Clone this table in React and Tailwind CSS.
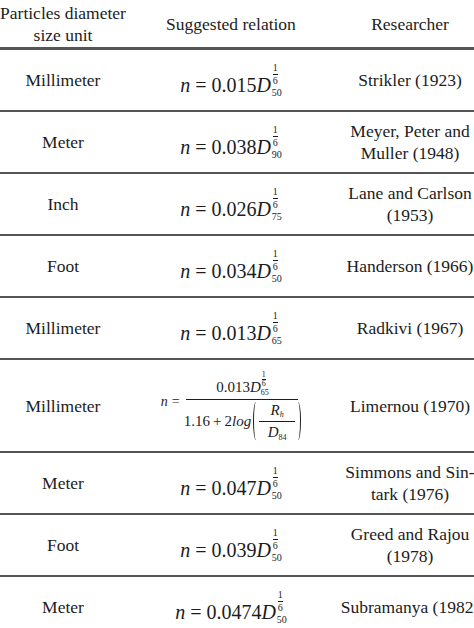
import React from 'react';

const ink = 'text-[#1c1c1c]';

const Power = ({ coef, sub }) => (
  <div className="flex items-end text-[20px] leading-none whitespace-nowrap">
    <span className="mb-[3px]">
      <i>n</i>
      <span className="mx-[5px]">=</span>
      {coef}
      <i>D</i>
    </span>
    <span className="flex flex-col items-start text-[10px] leading-none ml-[1px]">
      <span className="flex flex-col items-center w-[7px]">
        <span>1</span>
        <span className="h-px w-[5px] bg-[#1c1c1c] mt-[1px] mb-[1px]" />
        <span>6</span>
      </span>
      <span className="mt-[2px]">{sub}</span>
    </span>
  </div>
);

const Limernou = () => (
  <div className="flex items-center leading-none whitespace-nowrap">
    <span className="text-[14px] mr-[4px] mt-[-8px]">
      <i>n</i>
      <span className="ml-[4px]">=</span>
    </span>
    <div className="flex flex-col items-center">
      <div className="flex items-end text-[15px]">
        <span className="mb-[2px]">
          0.013<i>D</i>
        </span>
        <span className="flex flex-col items-start text-[8px] leading-none">
          <span className="flex flex-col items-center w-[6px]">
            <span>1</span>
            <span className="h-px w-[4px] bg-[#1c1c1c]" />
            <span>6</span>
          </span>
          <span className="mt-[1px]">65</span>
        </span>
      </div>
      <div className="h-px w-[112px] bg-[#1c1c1c] mt-[2px]" />
      <div className="flex items-center text-[15px] mt-[2px]">
        <span>
          1.16<span className="mx-[3px]">+</span>2<i>log</i>
        </span>
        <span className="w-[6px] h-[38px] border-l border-[#1c1c1c] rounded-l-[50%] ml-[2px]" />
        <span className="flex flex-col items-center">
          <span className="flex items-end px-[3px]">
            <i>R</i>
            <i className="text-[8px] mb-[-1px]">h</i>
          </span>
          <span className="h-px w-[36px] bg-[#1c1c1c] my-[3px]" />
          <span className="flex items-end px-[3px]">
            <i>D</i>
            <span className="text-[8px] mb-[-2px]">84</span>
          </span>
        </span>
        <span className="w-[6px] h-[38px] border-r border-[#1c1c1c] rounded-r-[50%]" />
      </div>
    </div>
  </div>
);

const rows = [
  { unit: 'Millimeter', f: <Power coef="0.015" sub="50" />, who: ['Strikler (1923)'] },
  { unit: 'Meter', f: <Power coef="0.038" sub="90" />, who: ['Meyer, Peter and', 'Muller (1948)'] },
  { unit: 'Inch', f: <Power coef="0.026" sub="75" />, who: ['Lane and Carlson', '(1953)'] },
  { unit: 'Foot', f: <Power coef="0.034" sub="50" />, who: ['Handerson (1966)'] },
  { unit: 'Millimeter', f: <Power coef="0.013" sub="65" />, who: ['Radkivi (1967)'] },
  { unit: 'Millimeter', f: <Limernou />, who: ['Limernou (1970)'], tall: true },
  { unit: 'Meter', f: <Power coef="0.047" sub="50" />, who: ['Simmons and Sin-', 'tark (1976)'] },
  { unit: 'Foot', f: <Power coef="0.039" sub="50" />, who: ['Greed and Rajou', '(1978)'] },
  { unit: 'Meter', f: <Power coef="0.0474" sub="50" />, who: ['Subramanya (1982)'] },
];

const cols = 'grid grid-cols-[134px_202px_156px]';

export default function App() {
  return (
    <div
      className={`w-[474px] h-[628px] overflow-hidden bg-white ${ink}`}
      style={{ fontFamily: '"Liberation Serif", "Times New Roman", serif' }}
    >
      <div className="w-[492px] ml-[-4px] text-[17.5px] leading-[22px]">
        <div className={`${cols} h-[50px] border-b-[3px] border-[#555] items-center text-center`}>
          <div className="whitespace-nowrap">
            Particles diameter
            <br />
            size unit
          </div>
          <div className="whitespace-nowrap">Suggested relation</div>
          <div className="whitespace-nowrap">Researcher</div>
        </div>
        {rows.map((r, i) => (
          <div
            key={i}
            className={`${cols} ${r.tall ? 'h-[93px]' : 'h-[62px]'} border-b-2 border-[#555] items-center text-center`}
          >
            <div className="whitespace-nowrap">{r.unit}</div>
            <div className="flex justify-center">{r.f}</div>
            <div className="whitespace-nowrap">
              {r.who.map((w, j) => (
                <div key={j}>{w}</div>
              ))}
            </div>
          </div>
        ))}
      </div>
    </div>
  );
}
